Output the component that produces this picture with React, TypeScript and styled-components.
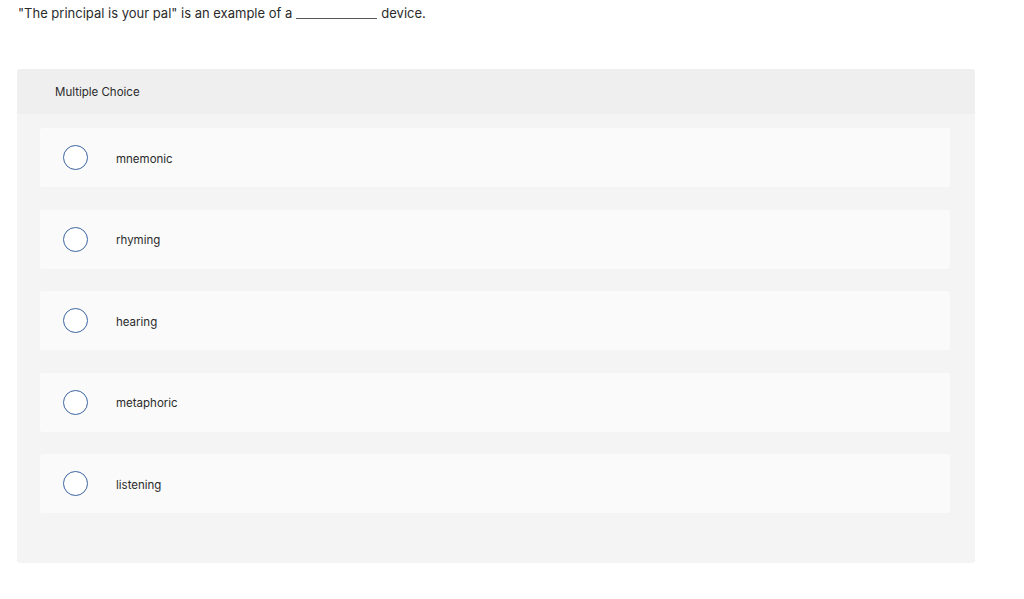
import React from 'react';
import styled, { createGlobalStyle } from 'styled-components';

const GlobalStyle = createGlobalStyle`
    html, body {
        margin: 0;
        padding: 0;
        background: #ffffff;
    }
    body {
        font-family: Inter, "Open Sans", "Liberation Sans", sans-serif;
        color: #2b2b2b;
    }
`;

const Page = styled.div`
    width: 1024px;
    padding: 4px 0 0 17px;
    box-sizing: border-box;
`;

const Question = styled.p`
    margin: 0 0 0 1px;
    font-size: 13px;
    line-height: 18px;
    color: #2b2b2b;
`;

const Blank = styled.span`
    display: inline-block;
    width: 81px;
    border-bottom: 1px solid #555555;
    margin: 0 4px;
    vertical-align: -1px;
    height: 12px;
`;

const Panel = styled.section`
    width: 958px;
    margin-top: 47px;
    background: #f4f4f4;
    border-radius: 3px;
    overflow: hidden;
`;

const PanelHeader = styled.header`
    height: 45px;
    background: #efefef;
    display: flex;
    align-items: center;
    padding-left: 38px;
    font-size: 11.5px;
    color: #2b2b2b;
`;

const OptionList = styled.ul`
    list-style: none;
    margin: 0;
    padding: 14px 25px 50px 23px;
    display: flex;
    flex-direction: column;
    gap: 22.5px;
`;

const Option = styled.li`
    height: 59px;
    background: #fafafa;
    border-radius: 3px;
    display: flex;
    align-items: center;
    padding-left: 23px;
    gap: 28px;
`;

const Radio = styled.span`
    width: 23px;
    height: 23px;
    border-radius: 50%;
    border: 1px solid #3a64a0;
    background: #ffffff;
    flex-shrink: 0;
`;

const Label = styled.span`
    font-size: 11.5px;
    padding-top: 2px;
    color: #2b2b2b;
`;

const options = ['mnemonic', 'rhyming', 'hearing', 'metaphoric', 'listening'];

const App: React.FC = () => {
    return (
        <Page>
            <GlobalStyle />
            <Question>
                "The principal is your pal" is an example of a<Blank />device.
            </Question>
            <Panel>
                <PanelHeader>Multiple Choice</PanelHeader>
                <OptionList>
                    {options.map(opt => (
                        <Option key={opt}>
                            <Radio />
                            <Label>{opt}</Label>
                        </Option>
                    ))}
                </OptionList>
            </Panel>
        </Page>
    );
};

export default App;
